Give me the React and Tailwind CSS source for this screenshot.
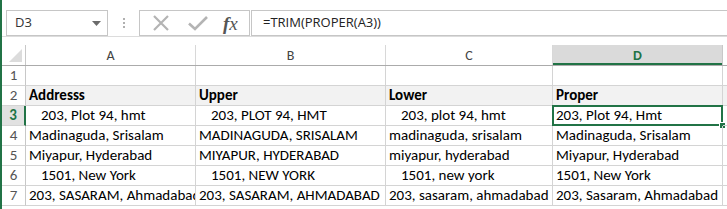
import React from 'react'

const COLS = [
  { key: 'A', w: 170 },
  { key: 'B', w: 190 },
  { key: 'C', w: 167 },
  { key: 'D', w: 170 },
  { key: 'E', w: 30 },
]

const ROWS = [
  { n: 1, cells: ['', '', '', '', ''] },
  { n: 2, head: true, cells: ['Addresss', 'Upper', 'Lower', 'Proper', ''] },
  { n: 3, cells: ['203, Plot 94, hmt', '203, PLOT 94, HMT', '203, plot 94, hmt', '203, Plot 94, Hmt', ''], indent: [1, 1, 1, 0] },
  { n: 4, cells: ['Madinaguda, Srisalam', 'MADINAGUDA, SRISALAM', 'madinaguda, srisalam', 'Madinaguda, Srisalam', ''] },
  { n: 5, cells: ['Miyapur, Hyderabad', 'MIYAPUR, HYDERABAD', 'miyapur, hyderabad', 'Miyapur, Hyderabad', ''] },
  { n: 6, cells: ['1501, New York', '1501, NEW YORK', '1501, new york', '1501, New York', ''], indent: [1, 1, 1, 0] },
  { n: 7, cells: ['203, SASARAM, Ahmadabad', '203, SASARAM, AHMADABAD', '203, sasaram, ahmadabad', '203, Sasaram, Ahmadabad', ''] },
]

const cellFont = { fontFamily: 'Carlito, Lato, "Open Sans", sans-serif' }

function FormulaBar() {
  return (
    <div className="h-[45px] flex items-start pt-[10px]" style={{ fontFamily: '"Open Sans", "Noto Sans", sans-serif' }}>
      <div className="ml-[4px] w-[102px] h-[26px] border border-[#c6c6c6] flex items-center justify-between pl-[8px] pr-[6px] text-[13px] text-[#333]">
        <span>D3</span>
        <svg width="9" height="5" viewBox="0 0 9 5"><path d="M0 0h9L4.5 5z" fill="#6b6b6b" /></svg>
      </div>
      <div className="w-[31px] h-[26px] flex flex-col items-center justify-center gap-[2px]">
        <span className="w-[2px] h-[2px] bg-[#b0b0b0]" />
        <span className="w-[2px] h-[2px] bg-[#b0b0b0]" />
        <span className="w-[2px] h-[2px] bg-[#b0b0b0]" />
      </div>
      <div className="w-[111px] h-[26px] border border-[#c6c6c6] flex items-center pl-[10px]">
        <svg width="18" height="16" viewBox="0 0 18 16" className="ml-[2px]">
          <path d="M2 1l14 14M16 1L2 15" stroke="#b4b4b4" strokeWidth="2.2" />
        </svg>
        <svg width="20" height="16" viewBox="0 0 20 16" className="ml-[18px]">
          <path d="M1 8.5l6 5.5L19 2" stroke="#b4b4b4" strokeWidth="2.6" fill="none" />
        </svg>
        <span className="ml-[15px] text-[19px] italic text-[#555] leading-none" style={{ fontFamily: '"Liberation Serif", serif' }}>
          <span className="font-semibold">f</span>x
        </span>
      </div>
      <div className="ml-[1px] flex-1 h-[26px] border border-r-0 border-[#c6c6c6] flex items-center pl-[11px] text-[13px] text-[#222]">
        =TRIM(PROPER(A3))
      </div>
    </div>
  )
}

export default function App() {
  return (
    <div className="w-[727px] h-[209px] bg-white flex overflow-hidden">
      <div className="w-[2px] h-full bg-[#217346] shrink-0" />
      <div className="flex-1 flex flex-col min-w-0">
        <div className="relative">
          <FormulaBar />
          <div className="absolute left-0 right-0 top-[36px] h-px bg-[#dcdcdc]" />
        </div>
        {/* column headers */}
        <div className="flex h-[21px] border-b border-[#ababab]" style={cellFont}>
          <div className="w-[24px] shrink-0 border-r border-[#c8c8c8] relative">
            <svg className="absolute right-[3px] bottom-[3px]" width="13" height="13" viewBox="0 0 13 13">
              <path d="M13 0V13H0z" fill="#dcdcdc" />
            </svg>
          </div>
          {COLS.map(c => (
            <div
              key={c.key}
              style={{ width: c.w }}
              className={`shrink-0 flex items-center justify-center text-[14px] border-r ${c.key === 'D' ? 'bg-[#dadada] text-[#217346] font-bold border-[#c8c8c8] shadow-[inset_0_-2px_0_#217346]' : 'text-[#444] border-[#d8d8d8]'}`}
            >
              {c.key === 'E' ? '' : c.key}
            </div>
          ))}
        </div>
        {/* rows */}
        {ROWS.map(r => (
          <div key={r.n} className={`flex h-[20px] shrink-0 ${r.head ? 'bg-[#f2f2f2]' : ''}`} style={cellFont}>
            <div
              className={`w-[24px] shrink-0 flex items-center justify-center text-[15px] border-b border-[#d4d4d4] ${r.n === 3 ? 'bg-[#e1e1e1] text-[#217346] font-bold border-r-2 border-r-[#217346]' : 'text-[#555] border-r border-r-[#c8c8c8] bg-white'}`}
            >
              {r.n}
            </div>
            {COLS.map((c, i) => {
              const sel = r.n === 3 && c.key === 'D'
              return (
                <div
                  key={c.key}
                  style={{ width: c.w }}
                  className={`relative shrink-0 border-b border-r border-[#d4d4d4] flex items-end text-[15px] leading-[19px] text-black whitespace-nowrap ${sel ? '' : 'overflow-hidden'} ${r.head ? 'font-bold' : ''} ${r.indent && r.indent[i] ? 'pl-[15px]' : 'pl-[3px]'}`}
                >
                  {r.cells[i]}
                  {sel && (
                    <>
                      <div className="absolute inset-[-1px] border-2 border-[#217346]" />
                      <div className="absolute right-[-4px] bottom-[-4px] w-[7px] h-[7px] bg-[#217346] border border-white" />
                    </>
                  )}
                </div>
              )
            })}
          </div>
        ))}
      </div>
    </div>
  )
}
